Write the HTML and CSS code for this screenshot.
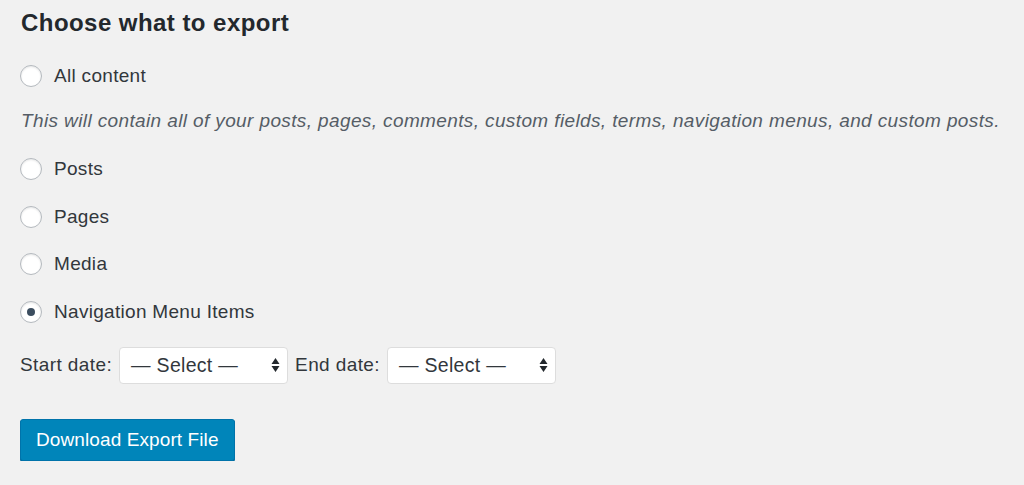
FILE: index.html
```html
<!DOCTYPE html>
<html>
<head>
<meta charset="utf-8">
<link rel="stylesheet" href="styles.css">
</head>
<body>
<div class="wrap">
  <h2 class="title">Choose what to export</h2>
  <label class="opt first"><span class="radio"></span>All content</label>
  <p class="desc">This will contain all of your posts, pages, comments, custom fields, terms, navigation menus, and custom posts.</p>
  <label class="opt"><span class="radio"></span>Posts</label>
  <label class="opt"><span class="radio"></span>Pages</label>
  <label class="opt"><span class="radio"></span>Media</label>
  <label class="opt"><span class="radio checked"></span>Navigation Menu Items</label>
  <div class="dates">
    <span class="lbl">Start date:</span>
    <div class="select"><span>— Select —</span><svg class="arr" width="9" height="16" viewBox="0 0 9 16"><path d="M4.5 1 L8.5 7 H0.5 Z M4.5 15 L8.5 9 H0.5 Z" fill="#23282d"/></svg></div>
    <span class="lbl">End date:</span>
    <div class="select"><span>— Select —</span><svg class="arr" width="9" height="16" viewBox="0 0 9 16"><path d="M4.5 1 L8.5 7 H0.5 Z M4.5 15 L8.5 9 H0.5 Z" fill="#23282d"/></svg></div>
  </div>
  <button class="btn">Download Export File</button>
</div>
</body>
</html>
```
FILE: styles.css
```css
html, body {
  margin: 0;
  padding: 0;
  background: #f1f1f1;
}
body {
  font-family: "Liberation Sans", Arial, sans-serif;
  color: #32373c;
  font-size: 19px;
  letter-spacing: 0.3px;
}
.wrap {
  padding: 8px 0 0 20px;
  display: flex;
  flex-direction: column;
  align-items: flex-start;
}
.title {
  margin: 0;
  font-size: 24px;
  font-weight: bold;
  color: #23282d;
  line-height: 30px;
  padding-left: 1px;
  letter-spacing: 0.45px;
}
.opt {
  display: flex;
  align-items: center;
  height: 24px;
  font-size: 19px;
  color: #32373c;
}
.opt.first { margin-top: 26px; }
.desc + .opt { margin-top: 24px; }
.opt + .opt { margin-top: 23.5px; }
.radio {
  width: 20px;
  height: 20px;
  border: 1px solid #b4b9be;
  border-radius: 50%;
  background: #fff;
  box-shadow: inset 0 1px 2px rgba(0,0,0,0.1);
  margin-right: 12px;
  position: relative;
  flex: none;
}
.radio.checked::after {
  content: "";
  position: absolute;
  width: 8px;
  height: 8px;
  border-radius: 50%;
  background: #3b4d5f;
  left: 6px;
  top: 6px;
}
.desc {
  margin: 21px 0 0 1px;
  font-style: italic;
  color: #555d66;
  font-size: 19px;
  line-height: 24px;
  letter-spacing: 0.38px;
}
.dates {
  display: flex;
  align-items: center;
  margin-top: 23px;
  gap: 7px;
}
.lbl {
  font-size: 19px;
  color: #32373c;
  letter-spacing: 0.4px;
}
.select {
  border: 1px solid #ddd;
  border-radius: 4px;
  background: #fff;
  display: flex;
  align-items: center;
  justify-content: space-between;
  padding: 0 7px 0 11px;
  box-sizing: border-box;
  width: 169px;
  height: 37px;
  font-size: 19.5px;
  color: #32373c;
}
.btn {
  margin-top: 35px;
  background: #0085ba;
  border: 1px solid #0073aa;
  border-radius: 3px;
  color: #fff;
  font-family: "Liberation Sans", Arial, sans-serif;
  font-size: 19px;
  letter-spacing: 0.1px;
  height: 42px;
  padding: 0 15px;
  box-shadow: 0 1px 0 #006799;
}
```
